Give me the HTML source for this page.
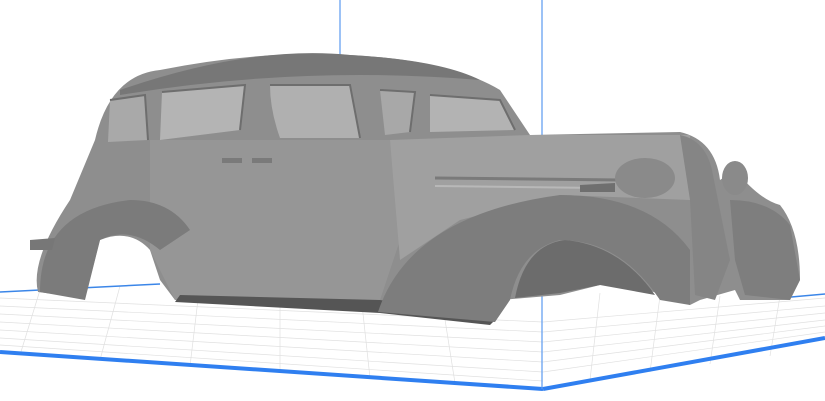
<!DOCTYPE html>
<html><head><style>html,body{margin:0;padding:0;background:#fff;width:825px;height:401px;overflow:hidden}</style></head>
<body>
<svg width="825" height="401" viewBox="0 0 825 401" xmlns="http://www.w3.org/2000/svg">
<rect width="825" height="401" fill="#fff"/>
<!-- grid -->
<g stroke="#e0e0e0" stroke-width="0.7">
<line x1="0" y1="298" x2="543" y2="322"/><line x1="0" y1="306" x2="543" y2="332"/><line x1="0" y1="314" x2="543" y2="342"/><line x1="0" y1="322" x2="543" y2="352"/><line x1="0" y1="330" x2="543" y2="362"/><line x1="0" y1="338" x2="543" y2="372"/><line x1="0" y1="345" x2="543" y2="381"/>
<line x1="543" y1="322" x2="825" y2="298"/><line x1="543" y1="332" x2="825" y2="306"/><line x1="543" y1="342" x2="825" y2="313"/><line x1="543" y1="352" x2="825" y2="320"/><line x1="543" y1="362" x2="825" y2="326"/><line x1="543" y1="372" x2="825" y2="332"/>
<line x1="40" y1="290" x2="20" y2="355"/><line x1="120" y1="286" x2="100" y2="360"/><line x1="200" y1="283" x2="190" y2="366"/><line x1="280" y1="284" x2="280" y2="372"/><line x1="360" y1="286" x2="370" y2="378"/><line x1="440" y1="288" x2="455" y2="383"/>
<line x1="600" y1="293" x2="590" y2="380"/><line x1="660" y1="296" x2="650" y2="372"/><line x1="720" y1="296" x2="710" y2="364"/><line x1="780" y1="296" x2="770" y2="356"/>
</g>
<line x1="0" y1="292" x2="160" y2="284" stroke="#3b86e8" stroke-width="1.5"/>
<line x1="780" y1="298" x2="825" y2="294" stroke="#3b86e8" stroke-width="1.5"/>
<line x1="0" y1="352" x2="543" y2="389" stroke="#2f7ff0" stroke-width="4"/>
<line x1="543" y1="389" x2="825" y2="338" stroke="#2f7ff0" stroke-width="4"/>
<line x1="340" y1="0" x2="340" y2="55" stroke="#5b9af0" stroke-width="1.2"/>
<line x1="542" y1="0" x2="542" y2="389" stroke="#5b9af0" stroke-width="1.2"/>
<!-- car body -->
<path d="M95,140 Q110,75 160,70 Q260,50 350,55 Q450,60 500,90 L530,135 L680,132 Q715,140 720,180 L735,170 Q760,200 780,205 Q800,230 800,280 L790,300 L740,300 L735,290 L700,300 L690,305 L620,280 L560,295 L500,300 L495,322 L380,310 L175,300 L160,280 L150,250 Q130,228 100,240 L85,298 L38,292 Q30,260 70,200 Z" fill="#8e8e8e"/>
<!-- roof highlight -->
<path d="M120,90 Q250,45 350,55 Q440,60 480,80 Q300,65 120,95 Z" fill="#777"/>
<!-- windows -->
<path d="M110,100 L145,95 L148,140 L108,142 Z" fill="#a9a9a9"/>
<path d="M162,92 L245,85 L240,130 L160,140 Z" fill="#b4b4b4"/>
<path d="M270,85 L350,85 L360,138 L280,138 Q270,110 270,85 Z" fill="#b0b0b0"/>
<path d="M380,90 L415,92 L410,132 L385,135 Z" fill="#a8a8a8"/>
<path d="M430,95 L500,100 L515,130 L430,132 Z" fill="#b3b3b3"/>
<g stroke="#6e6e6e" stroke-width="2" fill="none">
<path d="M110,100 L145,95 L148,140"/><path d="M162,92 L245,85 L240,130"/><path d="M270,85 L350,85 L360,138"/><path d="M380,90 L415,92 L410,132"/><path d="M430,95 L500,100 L515,130"/>
</g>
<!-- lower body sides lighter -->
<path d="M150,140 L390,140 L400,240 L380,300 L175,300 L160,270 L150,250 Z" fill="#969696"/>
<path d="M390,140 L530,135 L690,135 L690,200 L560,195 L460,220 L400,260 Z" fill="#a0a0a0"/>
<line x1="435" y1="178" x2="620" y2="180" stroke="#7a7a7a" stroke-width="3"/>
<line x1="435" y1="186" x2="600" y2="188" stroke="#b8b8b8" stroke-width="2"/>
<!-- rocker -->
<path d="M180,295 L380,300 L495,320 L490,325 L380,313 L175,302 Z" fill="#555"/>
<!-- rear fender -->
<path d="M40,292 Q40,210 130,200 Q170,200 190,230 L160,250 Q130,225 100,240 L85,300 Z" fill="#7b7b7b"/>
<path d="M30,240 L55,238 L52,250 L30,250 Z" fill="#777"/>
<!-- front wheel well interior -->
<path d="M515,298 Q525,245 565,240 Q620,245 655,295 L600,285 L560,293 Z" fill="#6c6c6c"/>
<!-- front fender -->
<path d="M378,312 Q410,215 560,195 Q650,195 690,250 L690,305 L660,300 Q620,240 560,240 Q520,250 510,300 L495,322 Z" fill="#7d7d7d"/>
<!-- grille / nose -->
<path d="M680,135 Q705,140 712,170 L730,260 L715,300 L695,295 L690,200 Z" fill="#858585"/>
<path d="M730,200 Q770,200 790,225 L800,280 L790,300 L745,295 L735,260 Z" fill="#7e7e7e"/>
<!-- headlights -->
<ellipse cx="645" cy="178" rx="30" ry="20" fill="#8a8a8a"/>
<ellipse cx="735" cy="178" rx="13" ry="17" fill="#8a8a8a"/>
<path d="M580,185 L615,183 L615,192 L580,192 Z" fill="#6f6f6f"/>
<!-- handles -->
<rect x="222" y="158" width="20" height="5" fill="#7a7a7a"/><rect x="252" y="158" width="20" height="5" fill="#7a7a7a"/>
</svg>
</body></html>
